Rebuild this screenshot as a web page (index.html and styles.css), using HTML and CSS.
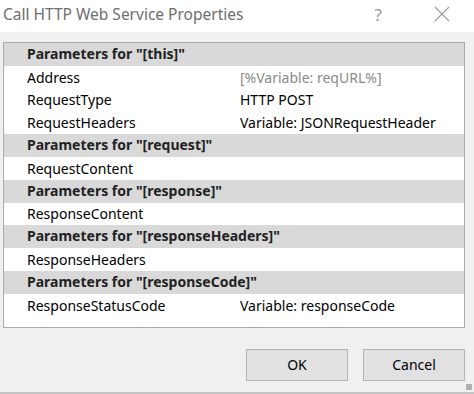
FILE: index.html
```html
<!DOCTYPE html>
<html lang="en">
<head>
    <meta charset="UTF-8">
    <meta name="viewport" content="width=device-width, initial-scale=1.0">
    <title>Call HTTP Web Service Properties</title>
    <link rel="stylesheet" href="styles.css">
</head>
<body>

<div class="dialog">
    <div class="title-bar">
        <span class="title">Call HTTP Web Service Properties</span>
        <span class="help-button">?</span>
        <span class="close-button">
            <svg width="16" height="16" viewBox="0 0 16 16">
                <path d="M1 1 L15 15 M15 1 L1 15" stroke="#9a9a9a" stroke-width="1.1" fill="none"/>
            </svg>
        </span>
    </div>

    <div class="dialog-body">
        <div class="prop-grid">
            <div class="group-row">Parameters for "[this]"</div>
            <div class="prop-row">
                <span class="prop-name">Address</span>
                <span class="prop-value placeholder">[%Variable: reqURL%]</span>
            </div>
            <div class="prop-row">
                <span class="prop-name">RequestType</span>
                <span class="prop-value">HTTP POST</span>
            </div>
            <div class="prop-row">
                <span class="prop-name">RequestHeaders</span>
                <span class="prop-value">Variable: JSONRequestHeader</span>
            </div>

            <div class="group-row">Parameters for "[request]"</div>
            <div class="prop-row">
                <span class="prop-name">RequestContent</span>
                <span class="prop-value"></span>
            </div>

            <div class="group-row">Parameters for "[response]"</div>
            <div class="prop-row">
                <span class="prop-name">ResponseContent</span>
                <span class="prop-value"></span>
            </div>

            <div class="group-row">Parameters for "[responseHeaders]"</div>
            <div class="prop-row">
                <span class="prop-name">ResponseHeaders</span>
                <span class="prop-value"></span>
            </div>

            <div class="group-row">Parameters for "[responseCode]"</div>
            <div class="prop-row">
                <span class="prop-name">ResponseStatusCode</span>
                <span class="prop-value">Variable: responseCode</span>
            </div>
        </div>

        <div class="button-row">
            <button class="dialog-button">OK</button>
            <button class="dialog-button">Cancel</button>
            <span class="grip"></span>
        </div>
    </div>
</div>

</body>
</html>
```

FILE: styles.css
```css
body {
    margin: 0;
    font-family: "Noto Sans", "Open Sans", sans-serif;
    font-size: 14px;
    color: #000;
    background-color: #f0f0f0;
}
.dialog {
    width: 474px;
    height: 394px;
    display: flex;
    flex-direction: column;
    box-sizing: border-box;
    border-bottom: 2px solid #c4c4c4;
}
.title-bar {
    height: 32px;
    background-color: #fff;
    display: flex;
    align-items: center;
    padding-left: 3px;
}
.title {
    flex: 1;
    font-size: 15.5px;
    color: #6e6e6e;
    margin-top: -4px;
}
.help-button {
    font-size: 17px;
    color: #9a9a9a;
    margin-right: 52px;
    margin-top: -4px;
}
.close-button {
    display: flex;
    margin-right: 24px;
    margin-top: -4px;
}
.dialog-body {
    flex: 1;
    padding: 10px 9px 0 3px;
    display: flex;
    flex-direction: column;
}
.prop-grid {
    background-color: #fff;
    border: 1px solid #a9a9a9;
    padding-bottom: 10px;
}
.group-row {
    height: 22.8px;
    line-height: 22.8px;
    padding-left: 23px;
    background-color: #d9d9d9;
    font-weight: bold;
    color: #222;
}
.prop-row {
    height: 22.8px;
    display: grid;
    grid-template-columns: 236px 1fr;
    align-items: center;
}
.prop-name {
    padding-left: 23px;
}
.placeholder {
    color: #8a8a8a;
}
.button-row {
    position: relative;
    display: flex;
    justify-content: flex-end;
    gap: 15px;
    margin-top: 21px;
}
.dialog-button {
    width: 102px;
    height: 32px;
    font-family: inherit;
    font-size: 14px;
    background-color: #e1e1e1;
    border: 1px solid #b4b4b4;
    color: #000;
}
.grip {
    position: absolute;
    right: -7px;
    bottom: -9px;
    width: 6px;
    height: 6px;
    background-image: radial-gradient(circle, #b0b0b0 0.8px, transparent 1px);
    background-size: 2px 2px;
}
```
